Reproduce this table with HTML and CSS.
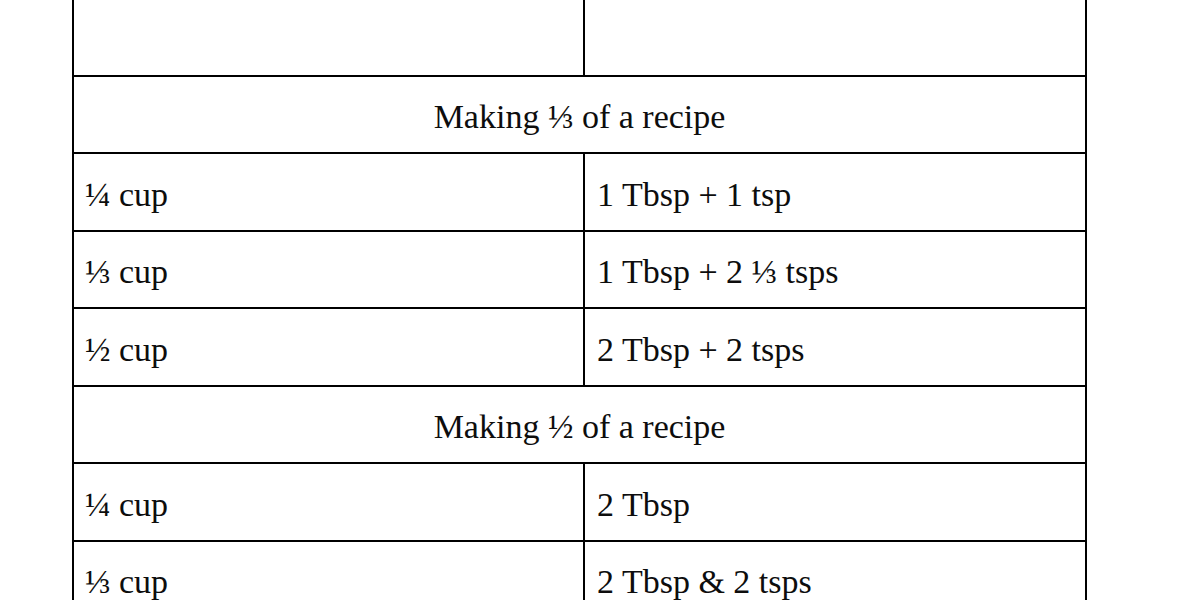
FILE: index.html
```html
<!DOCTYPE html>
<html lang="en">
<head>
<meta charset="utf-8">
<title>Recipe scaling</title>
<link rel="stylesheet" href="styles.css">
</head>
<body>
<div class="sheet">
  <div class="row first">
    <div class="cell"></div>
    <div class="cell"></div>
  </div>
  <div class="row head">
    <div class="cell">Making ⅓ of a recipe</div>
  </div>
  <div class="row">
    <div class="cell">¼ cup</div>
    <div class="cell">1 Tbsp + 1 tsp</div>
  </div>
  <div class="row">
    <div class="cell">⅓ cup</div>
    <div class="cell">1 Tbsp + 2 ⅓ tsps</div>
  </div>
  <div class="row">
    <div class="cell">½ cup</div>
    <div class="cell">2 Tbsp + 2 tsps</div>
  </div>
  <div class="row head">
    <div class="cell">Making ½ of a recipe</div>
  </div>
  <div class="row">
    <div class="cell">¼ cup</div>
    <div class="cell">2 Tbsp</div>
  </div>
  <div class="row">
    <div class="cell">⅓ cup</div>
    <div class="cell">2 Tbsp &amp; 2 tsps</div>
  </div>
</div>
</body>
</html>
```

FILE: styles.css
```css
html, body {
  margin: 0;
  padding: 0;
  background: #fff;
  overflow: hidden;
}

body {
  font-family: "Liberation Serif", "DejaVu Serif", serif;
  font-size: 34px;
  color: #0d0d0d;
}

.sheet {
  margin-left: 72px;
  width: 1015px;
  box-sizing: border-box;
  border-left: 2px solid #000;
  border-right: 2px solid #000;
}

.row {
  display: flex;
  height: 78px;
  box-sizing: border-box;
  border-top: 2px solid #000;
}

.row:nth-child(even) {
  height: 77px;
}

.row.first {
  height: 75px;
  border-top: 0;
}

.cell {
  flex: 0 0 509px;
  box-sizing: border-box;
  display: flex;
  align-items: center;
  padding: 5px 0 0 11px;
  white-space: nowrap;
}

.cell + .cell {
  flex: 1 1 auto;
  border-left: 2px solid #000;
  padding-left: 12px;
}

.row.head .cell {
  flex: 1 1 auto;
  justify-content: center;
  padding-left: 0;
}
```
